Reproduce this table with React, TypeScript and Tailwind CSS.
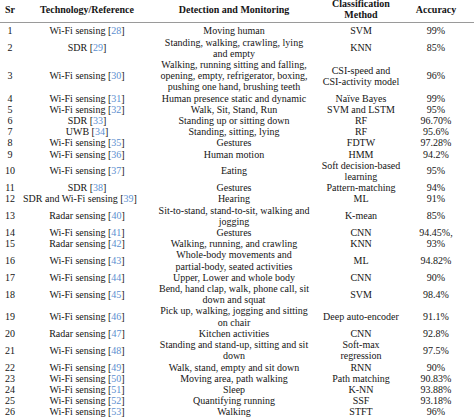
import React from "react";

type Row = {
  sr: number;
  tech: string;
  ref: number;
  detect: string[];
  method: string[];
  acc: string;
};

const rows: Row[] = [
  { sr: 1, tech: "Wi-Fi sensing", ref: 28, detect: ["Moving human"], method: ["SVM"], acc: "99%" },
  { sr: 2, tech: "SDR", ref: 29, detect: ["Standing, walking, crawling, lying", "and empty"], method: ["KNN"], acc: "85%" },
  {
    sr: 3,
    tech: "Wi-Fi sensing",
    ref: 30,
    detect: [
      "Walking, running sitting and falling,",
      "opening, empty, refrigerator, boxing,",
      "pushing one hand, brushing teeth",
    ],
    method: ["CSI-speed and", "CSI-activity model"],
    acc: "96%",
  },
  { sr: 4, tech: "Wi-Fi sensing", ref: 31, detect: ["Human presence static and dynamic"], method: ["Naïve Bayes"], acc: "99%" },
  { sr: 5, tech: "Wi-Fi sensing", ref: 32, detect: ["Walk, Sit, Stand, Run"], method: ["SVM and LSTM"], acc: "95%" },
  { sr: 6, tech: "SDR", ref: 33, detect: ["Standing up or sitting down"], method: ["RF"], acc: "96.70%" },
  { sr: 7, tech: "UWB", ref: 34, detect: ["Standing, sitting, lying"], method: ["RF"], acc: "95.6%" },
  { sr: 8, tech: "Wi-Fi sensing", ref: 35, detect: ["Gestures"], method: ["FDTW"], acc: "97.28%" },
  { sr: 9, tech: "Wi-Fi sensing", ref: 36, detect: ["Human motion"], method: ["HMM"], acc: "94.2%" },
  { sr: 10, tech: "Wi-Fi sensing", ref: 37, detect: ["Eating"], method: ["Soft decision-based", "learning"], acc: "95%" },
  { sr: 11, tech: "SDR", ref: 38, detect: ["Gestures"], method: ["Pattern-matching"], acc: "94%" },
  { sr: 12, tech: "SDR and Wi-Fi sensing", ref: 39, detect: ["Hearing"], method: ["ML"], acc: "91%" },
  { sr: 13, tech: "Radar sensing", ref: 40, detect: ["Sit-to-stand, stand-to-sit, walking and", "jogging"], method: ["K-mean"], acc: "85%" },
  { sr: 14, tech: "Wi-Fi sensing", ref: 41, detect: ["Gestures"], method: ["CNN"], acc: "94.45%," },
  { sr: 15, tech: "Radar sensing", ref: 42, detect: ["Walking, running, and crawling"], method: ["KNN"], acc: "93%" },
  { sr: 16, tech: "Wi-Fi sensing", ref: 43, detect: ["Whole-body movements and", "partial-body, seated activities"], method: ["ML"], acc: "94.82%" },
  { sr: 17, tech: "Wi-Fi sensing", ref: 44, detect: ["Upper, Lower and whole body"], method: ["CNN"], acc: "90%" },
  { sr: 18, tech: "Wi-Fi sensing", ref: 45, detect: ["Bend, hand clap, walk, phone call, sit", "down and squat"], method: ["SVM"], acc: "98.4%" },
  { sr: 19, tech: "Wi-Fi sensing", ref: 46, detect: ["Pick up, walking, jogging and sitting", "on chair"], method: ["Deep auto-encoder"], acc: "91.1%" },
  { sr: 20, tech: "Radar sensing", ref: 47, detect: ["Kitchen activities"], method: ["CNN"], acc: "92.8%" },
  { sr: 21, tech: "Wi-Fi sensing", ref: 48, detect: ["Standing and stand-up, sitting and sit", "down"], method: ["Soft-max", "regression"], acc: "97.5%" },
  { sr: 22, tech: "Wi-Fi sensing", ref: 49, detect: ["Walk, stand, empty and sit down"], method: ["RNN"], acc: "90%" },
  { sr: 23, tech: "Wi-Fi sensing", ref: 50, detect: ["Moving area, path walking"], method: ["Path matching"], acc: "90.83%" },
  { sr: 24, tech: "Wi-Fi sensing", ref: 51, detect: ["Sleep"], method: ["K-NN"], acc: "93.88%" },
  { sr: 25, tech: "Wi-Fi sensing", ref: 52, detect: ["Quantifying running"], method: ["SSF"], acc: "93.18%" },
  { sr: 26, tech: "Wi-Fi sensing", ref: 53, detect: ["Walking"], method: ["STFT"], acc: "96%" },
];

const cols = "grid grid-cols-[20px_134px_160px_94px_56px]";
const cell = "flex flex-col items-center justify-center whitespace-nowrap";

function Lines({ lines }: { lines: string[] }) {
  return (
    <>
      {lines.map((l) => (
        <span key={l}>{l}</span>
      ))}
    </>
  );
}

export default function App() {
  return (
    <div className="w-[474px] h-[419px] overflow-hidden bg-white font-['Liberation_Serif',serif] text-[10px] leading-[11.2px] text-[#151515]">
      <div className="-mt-[2px]">
        {/* header */}
        <div className="border-b border-[#9a9a9a] pb-[2px] mb-[2px]">
          <div className={`${cols} font-bold`}>
            <div className={cell}>Sr</div>
            <div className={cell}>Technology/Reference</div>
            <div className={cell}>Detection and Monitoring</div>
            <div className={cell}>
              <span>Classification</span>
              <span>Method</span>
            </div>
            <div className={cell}>Accuracy</div>
          </div>
        </div>

        {/* body */}
        {rows.map((r) => (
          <div key={r.sr} className={cols}>
            <div className={cell}>{r.sr}</div>
            <div className={r.sr === 12 ? `${cell} pl-[4px] pr-[18px]` : cell}>
              <span>
                {r.tech} [<span className="text-[#5b8fd0]">{r.ref}</span>]
              </span>
            </div>
            <div className={cell}>
              <Lines lines={r.detect} />
            </div>
            <div className={cell}>
              <Lines lines={r.method} />
            </div>
            <div className={cell}>{r.acc}</div>
          </div>
        ))}
      </div>
    </div>
  );
}
